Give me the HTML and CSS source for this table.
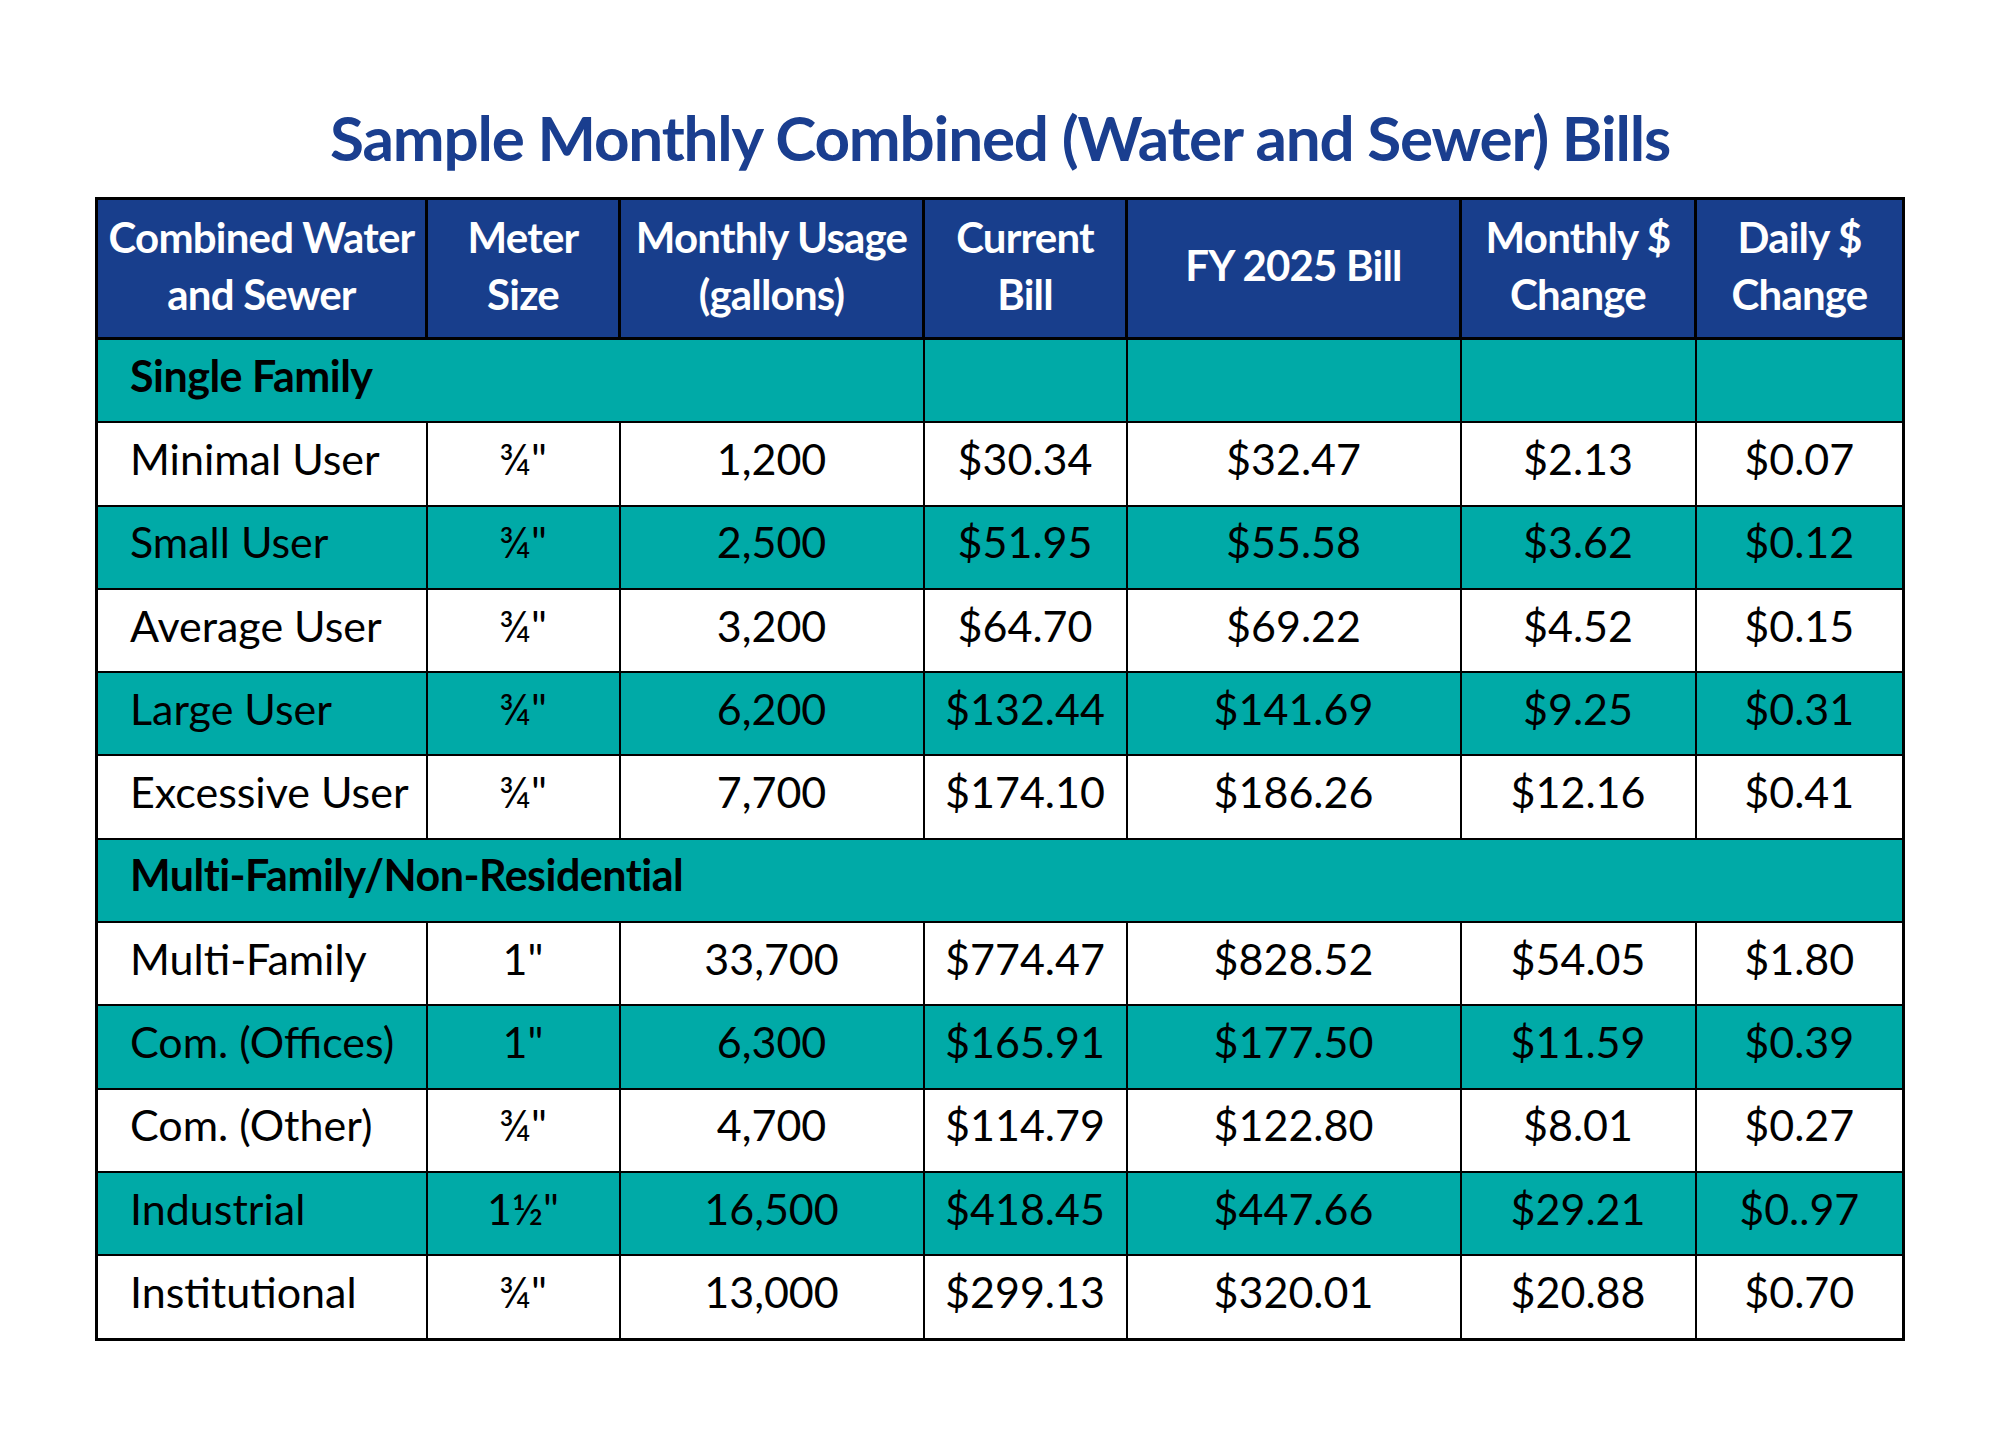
FILE: index.html
```html
<!DOCTYPE html>
<html lang="en">
<head>
<meta charset="utf-8">
<title>Sample Monthly Combined (Water and Sewer) Bills</title>
<link rel="stylesheet" href="styles.css">
</head>
<body>
<main class="page">
  <h1 class="title">Sample Monthly Combined (Water and Sewer) Bills</h1>
  <table class="bills">
    <colgroup>
      <col class="c1"><col class="c2"><col class="c3"><col class="c4"><col class="c5"><col class="c6"><col class="c7">
    </colgroup>
    <thead>
      <tr>
        <th>Combined Water<br>and Sewer</th>
        <th>Meter<br>Size</th>
        <th>Monthly Usage<br>(gallons)</th>
        <th>Current<br>Bill</th>
        <th>FY 2025 Bill</th>
        <th>Monthly $<br>Change</th>
        <th>Daily $<br>Change</th>
      </tr>
    </thead>
    <tbody>
      <tr class="group"><td colspan="3">Single Family</td><td></td><td></td><td></td><td></td></tr>
      <tr><td>Minimal User</td><td>¾"</td><td>1,200</td><td>$30.34</td><td>$32.47</td><td>$2.13</td><td>$0.07</td></tr>
      <tr class="alt"><td>Small User</td><td>¾"</td><td>2,500</td><td>$51.95</td><td>$55.58</td><td>$3.62</td><td>$0.12</td></tr>
      <tr><td>Average User</td><td>¾"</td><td>3,200</td><td>$64.70</td><td>$69.22</td><td>$4.52</td><td>$0.15</td></tr>
      <tr class="alt"><td>Large User</td><td>¾"</td><td>6,200</td><td>$132.44</td><td>$141.69</td><td>$9.25</td><td>$0.31</td></tr>
      <tr><td>Excessive User</td><td>¾"</td><td>7,700</td><td>$174.10</td><td>$186.26</td><td>$12.16</td><td>$0.41</td></tr>
      <tr class="group"><td colspan="7">Multi-Family/Non-Residential</td></tr>
      <tr><td>Multi-Family</td><td>1"</td><td>33,700</td><td>$774.47</td><td>$828.52</td><td>$54.05</td><td>$1.80</td></tr>
      <tr class="alt"><td>Com. (Offices)</td><td>1"</td><td>6,300</td><td>$165.91</td><td>$177.50</td><td>$11.59</td><td>$0.39</td></tr>
      <tr><td>Com. (Other)</td><td>¾"</td><td>4,700</td><td>$114.79</td><td>$122.80</td><td>$8.01</td><td>$0.27</td></tr>
      <tr class="alt"><td>Industrial</td><td>1½"</td><td>16,500</td><td>$418.45</td><td>$447.66</td><td>$29.21</td><td>$0..97</td></tr>
      <tr><td>Institutional</td><td>¾"</td><td>13,000</td><td>$299.13</td><td>$320.01</td><td>$20.88</td><td>$0.70</td></tr>
    </tbody>
  </table>
</main>
</body>
</html>
```
FILE: styles.css
```css
html, body {
  margin: 0;
  padding: 0;
  background: #ffffff;
}

body {
  font-family: Lato, "Noto Sans", sans-serif;
  color: #000000;
}

.page {
  width: 2000px;
  display: flex;
  flex-direction: column;
  align-items: center;
  padding-top: 97px;
}

.title {
  margin: 0 0 20px 0;
  font-family: Lato, "Noto Sans", sans-serif;
  font-weight: 700;
  font-size: 62px;
  line-height: 80px;
  letter-spacing: -1.2px;
  color: #1a3e8f;
}

.bills {
  border-collapse: collapse;
  table-layout: fixed;
  width: 1807px;
  border: 3px solid #000;
}

.c1 { width: 330px; }
.c2 { width: 193px; }
.c3 { width: 304px; }
.c4 { width: 203px; }
.c5 { width: 334px; }
.c6 { width: 235px; }
.c7 { width: 208px; }

.bills th {
  background: #183e8c;
  color: #ffffff;
  font-weight: 700;
  font-size: 42px;
  line-height: 57px;
  letter-spacing: -0.8px;
  height: 131px;
  padding: 0 0 6px 0;
  border: 3px solid #000;
  text-align: center;
  vertical-align: middle;
  white-space: nowrap;
}

.bills td {
  height: 71.3px;
  padding: 0 0 10px 0;
  border: 2px solid #000;
  font-size: 43px;
  line-height: 52px;
  font-weight: 400;
  text-align: center;
  vertical-align: middle;
  white-space: nowrap;
}

.bills td:first-child {
  text-align: left;
  padding-left: 32px;
}

.bills tr.alt td,
.bills tr.group td {
  background: #00aaa7;
}

.bills tr.group td {
  font-weight: 700;
  letter-spacing: -0.5px;
}
```
